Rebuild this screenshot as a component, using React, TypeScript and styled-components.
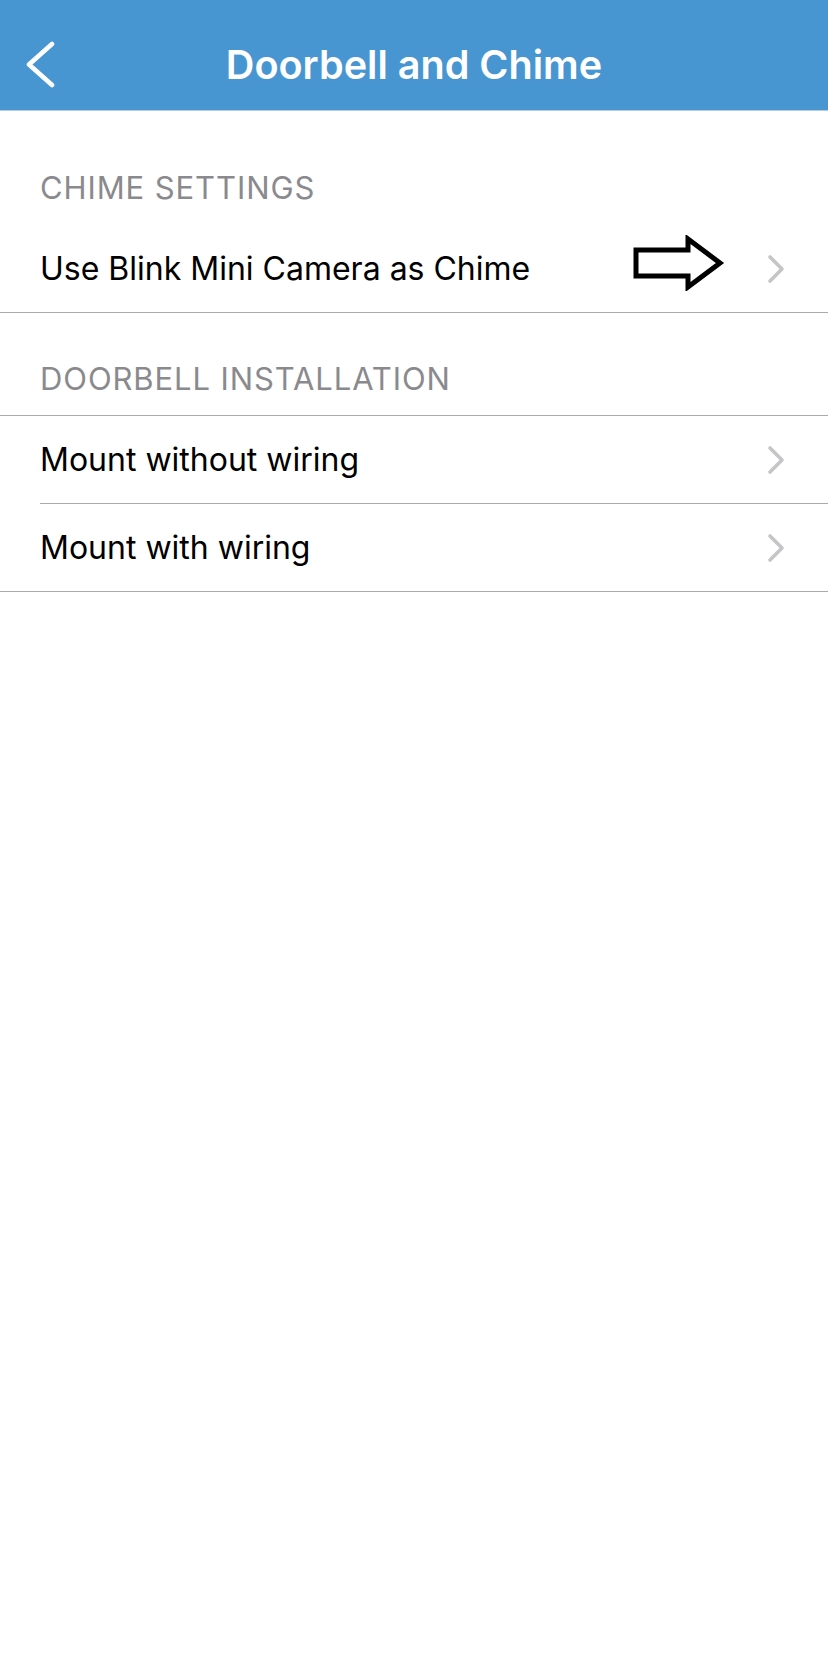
import React from "react";
import styled, { createGlobalStyle } from "styled-components";

const GlobalStyle = createGlobalStyle`
  html, body {
    margin: 0;
    padding: 0;
    background: #ffffff;
  }
  body {
    font-family: Inter, "Noto Sans", "Liberation Sans", sans-serif;
    -webkit-font-smoothing: antialiased;
  }
`;

const Page = styled.div`
  width: 828px;
  min-height: 1677px;
  background: #ffffff;
`;

const NavBar = styled.header`
  box-sizing: border-box;
  height: 111px;
  padding-top: 19px;
  background: #4896d1;
  border-bottom: 1px solid #b3cbe0;
  display: grid;
  grid-template-columns: 1fr auto 1fr;
  align-items: center;
`;

const BackButton = styled.button`
  justify-self: start;
  display: flex;
  align-items: center;
  padding: 0 0 0 25px;
  margin: 0;
  border: none;
  background: transparent;
  cursor: pointer;
`;

const Title = styled.h1`
  margin: 0;
  color: #ffffff;
  font-size: 39.6px;
  font-weight: 600;
  line-height: 48px;
  letter-spacing: 0;
  white-space: nowrap;
`;

const SectionHeader = styled.div<{ $top: number; $bottom: number }>`
  padding: ${(p) => p.$top}px 0 ${(p) => p.$bottom}px 40px;
  color: #8a8a8e;
  font-size: 31px;
  line-height: 36px;
  font-weight: 400;
  letter-spacing: 0.9px;
`;

const List = styled.div<{ $topLine?: boolean }>`
  border-top: ${(p) => (p.$topLine ? "1px solid #ababad" : "none")};
`;

const Row = styled.div<{ $inset?: boolean }>`
  box-sizing: border-box;
  height: 88px;
  display: flex;
  align-items: center;
  padding: 0 43px 0 40px;
  position: relative;
  border-bottom: ${(p) => (p.$inset ? "none" : "1px solid #ababad")};

  &::after {
    content: ${(p) => (p.$inset ? "''" : "none")};
    position: absolute;
    left: 40px;
    right: 0;
    bottom: 0;
    height: 1px;
    background: #ababad;
  }
`;

const RowLabel = styled.span`
  flex: 1;
  color: #000000;
  font-size: 32px;
  line-height: 40px;
  font-weight: 400;
  letter-spacing: 0;
  white-space: nowrap;
`;

const Annotation = styled.svg`
  flex: none;
  margin-right: 42px;
  margin-bottom: 12px;
`;

const Chevron = styled.svg`
  flex: none;
`;

const ChevronRight = () => (
  <Chevron width="18" height="30" viewBox="0 0 18 30">
    <path
      d="M3 3 L15 15 L3 27"
      fill="none"
      stroke="#c5c5c8"
      strokeWidth="3.6"
      strokeLinecap="round"
      strokeLinejoin="round"
    />
  </Chevron>
);

const BackIcon = () => (
  <svg width="30" height="50" viewBox="0 0 30 50">
    <path
      d="M27 4 L4 24.5 L27 45"
      fill="none"
      stroke="#ffffff"
      strokeWidth="4.6"
      strokeLinecap="round"
      strokeLinejoin="round"
    />
  </svg>
);

const ArrowMark = () => (
  <Annotation width="92" height="56" viewBox="0 0 92 56">
    <polygon
      points="3,15 55,15 55,4 87,28 55,52 55,41 3,41"
      fill="#ffffff"
      stroke="#000000"
      strokeWidth="5"
      strokeLinejoin="miter"
    />
  </Annotation>
);

export default function App() {
  return (
    <Page>
      <GlobalStyle />
      <NavBar>
        <BackButton aria-label="Back">
          <BackIcon />
        </BackButton>
        <Title>Doorbell and Chime</Title>
        <div />
      </NavBar>

      <SectionHeader $top={59} $bottom={19}>CHIME SETTINGS</SectionHeader>
      <List>
        <Row>
          <RowLabel>Use Blink Mini Camera as Chime</RowLabel>
          <ArrowMark />
          <ChevronRight />
        </Row>
      </List>

      <SectionHeader $top={48} $bottom={18}>DOORBELL INSTALLATION</SectionHeader>
      <List $topLine>
        <Row $inset>
          <RowLabel>Mount without wiring</RowLabel>
          <ChevronRight />
        </Row>
        <Row>
          <RowLabel>Mount with wiring</RowLabel>
          <ChevronRight />
        </Row>
      </List>
    </Page>
  );
}
